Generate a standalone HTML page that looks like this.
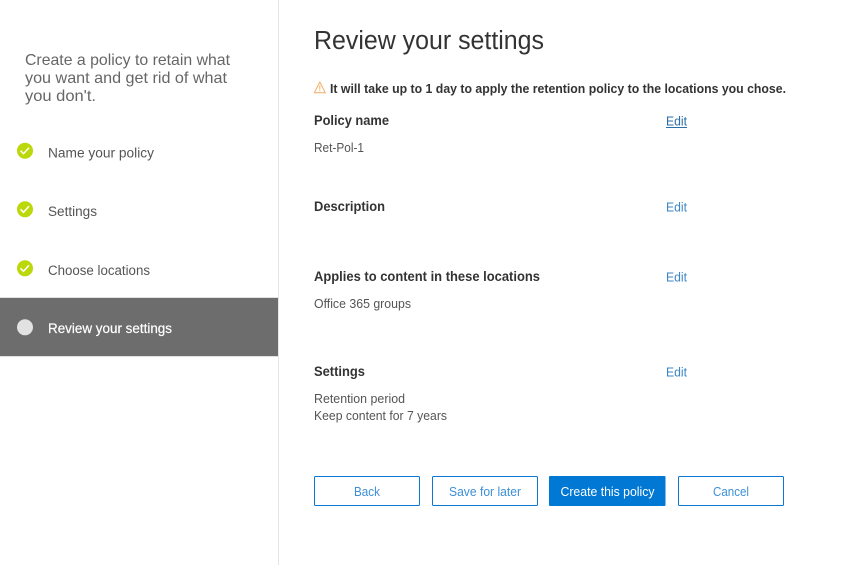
<!DOCTYPE html>
<html><head><meta charset="utf-8"><style>
html,body{margin:0;padding:0;background:#fff;width:862px;height:565px;overflow:hidden}
svg{display:block}
text{font-family:"Liberation Sans",sans-serif;white-space:pre}
.h{font-size:16px;fill:#666}
.n{font-size:13.5px;fill:#555}
.b{font-size:13.5px;font-weight:bold;fill:#333}
.t{font-size:12.5px;fill:#555}
.e{font-size:12.5px;fill:#3c85c4}
.c{font-size:12.5px;fill:#3d8fd6;text-anchor:middle}
</style></head><body>
<svg width="862" height="565" viewBox="0 0 862 565" xmlns="http://www.w3.org/2000/svg">
<rect x="278" y="0" width="1" height="565" fill="#e4e4e4"/>
<rect x="0" y="297" width="278" height="60" fill="#e0e0e0"/>
<rect x="0" y="298" width="278" height="58" fill="#6d6d6d"/>

<text class="h" x="25" y="65" textLength="205" lengthAdjust="spacingAndGlyphs">Create a policy to retain what</text>
<text class="h" x="25" y="83" textLength="202" lengthAdjust="spacingAndGlyphs">you want and get rid of what</text>
<text class="h" x="25" y="101" textLength="71" lengthAdjust="spacingAndGlyphs">you don't.</text>

<g id="checks">
<circle cx="25" cy="150.700" r="8" fill="#bad80a"/><path d="M20.500 150.700l3 3 5.500-6" fill="none" stroke="#fff" stroke-width="1.500"/>
<circle cx="25" cy="209.300" r="8" fill="#bad80a"/><path d="M20.500 209.300l3 3 5.500-6" fill="none" stroke="#fff" stroke-width="1.500"/>
<circle cx="25" cy="268.300" r="8" fill="#bad80a"/><path d="M20.500 268.300l3 3 5.500-6" fill="none" stroke="#fff" stroke-width="1.500"/>
<circle cx="25" cy="327.300" r="8" fill="#e2e2e2"/>
</g>

<text class="n" x="48" y="157.600" textLength="106" lengthAdjust="spacingAndGlyphs">Name your policy</text>
<text class="n" x="48" y="216" textLength="49" lengthAdjust="spacingAndGlyphs">Settings</text>
<text class="n" x="48" y="275" textLength="102" lengthAdjust="spacingAndGlyphs">Choose locations</text>
<text class="n" x="48" y="333" textLength="124" lengthAdjust="spacingAndGlyphs" style="fill:#fff;stroke:#fff;stroke-width:.2">Review your settings</text>

<text x="314" y="49" textLength="230" lengthAdjust="spacingAndGlyphs" style="font-size:25.500px;fill:#333">Review your settings</text>

<path d="M319.800 82L325.300 92.800H314.300Z" fill="#fff" stroke="#f5ab62" stroke-width="1" stroke-linejoin="round"/>
<path d="M319.800 85.500v4M319.800 90.300v1" stroke="#f5ab62" stroke-width="1"/>
<text x="330" y="93" textLength="456" lengthAdjust="spacingAndGlyphs" style="font-size:12.500px;font-weight:bold;fill:#333">It will take up to 1 day to apply the retention policy to the locations you chose.</text>

<text class="b" x="314" y="125" textLength="75" lengthAdjust="spacingAndGlyphs">Policy name</text>
<text class="e" x="666" y="125.500" textLength="21" lengthAdjust="spacingAndGlyphs" style="fill:#2b6da8">Edit</text>
<rect x="666" y="127" width="21" height="1" fill="#2b6da8"/>
<text class="t" x="314" y="152" textLength="50" lengthAdjust="spacingAndGlyphs">Ret-Pol-1</text>

<text class="b" x="314" y="211" textLength="71" lengthAdjust="spacingAndGlyphs">Description</text>
<text class="e" x="666" y="211.500" textLength="21" lengthAdjust="spacingAndGlyphs">Edit</text>

<text class="b" x="314" y="281" textLength="226" lengthAdjust="spacingAndGlyphs">Applies to content in these locations</text>
<text class="e" x="666" y="281.500" textLength="21" lengthAdjust="spacingAndGlyphs">Edit</text>
<text class="t" x="314" y="308" textLength="97" lengthAdjust="spacingAndGlyphs">Office 365 groups</text>

<text class="b" x="314" y="376" textLength="51" lengthAdjust="spacingAndGlyphs">Settings</text>
<text class="e" x="666" y="376.500" textLength="21" lengthAdjust="spacingAndGlyphs">Edit</text>
<text class="t" x="314" y="403" textLength="91" lengthAdjust="spacingAndGlyphs">Retention period</text>
<text class="t" x="314" y="420" textLength="133" lengthAdjust="spacingAndGlyphs">Keep content for 7 years</text>

<rect x="314.500" y="476.500" width="105" height="29" rx="1" fill="#fff" stroke="#0a78d4"/>
<rect x="432.500" y="476.500" width="105" height="29" rx="1" fill="#fff" stroke="#0a78d4"/>
<rect x="549" y="476" width="116.500" height="30" rx="1" fill="#0078d4"/>
<rect x="678.500" y="476.500" width="105" height="29" rx="1" fill="#fff" stroke="#0a78d4"/>
<text class="c" x="367" y="496" textLength="26" lengthAdjust="spacingAndGlyphs">Back</text>
<text class="c" x="485" y="496" textLength="72" lengthAdjust="spacingAndGlyphs">Save for later</text>
<text class="c" x="607.500" y="496" textLength="94" lengthAdjust="spacingAndGlyphs" style="fill:#fff">Create this policy</text>
<text class="c" x="731" y="496" textLength="36" lengthAdjust="spacingAndGlyphs">Cancel</text>
</svg>
</body></html>
